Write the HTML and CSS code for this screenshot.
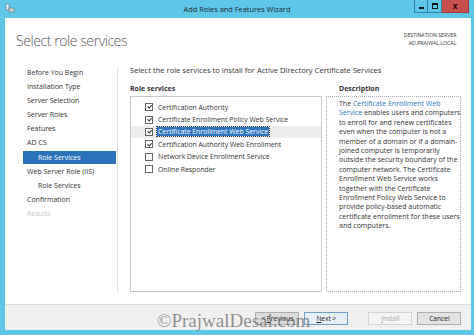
FILE: index.html
```html
<!DOCTYPE html>
<html lang="en">
<head>
  <meta charset="UTF-8">
  <title>Add Roles and Features Wizard</title>
  <link rel="stylesheet" href="styles.css">
</head>
<body>
  <div class="window">
    <div class="titlebar">
      <svg class="app-icon" width="10" height="10" viewBox="0 0 10 10">
        <rect x="1" y="1" width="3" height="6" fill="#e8f4f8" stroke="#7a8a90" stroke-width="0.8"/>
        <rect x="4" y="5" width="5" height="4" fill="#c9d3d6" stroke="#7a8a90" stroke-width="0.8"/>
      </svg>
      <span class="title">Add Roles and Features Wizard</span>
      <div class="controls">
        <span class="ctl ctl-min"><i></i></span>
        <span class="ctl ctl-max"><i></i></span>
        <span class="ctl ctl-close">x</span>
      </div>
    </div>

    <div class="frame">
      <div class="client">
        <header class="header">
          <h1 class="page-title">Select role services</h1>
          <div class="dest">
            <div>DESTINATION SERVER</div>
            <div>AD.PRAJWAL.LOCAL</div>
          </div>
        </header>

        <div class="body">
          <ul class="steps">
            <li>Before You Begin</li>
            <li>Installation Type</li>
            <li>Server Selection</li>
            <li>Server Roles</li>
            <li>Features</li>
            <li>AD CS</li>
            <li class="sub active">Role Services</li>
            <li>Web Server Role (IIS)</li>
            <li class="sub">Role Services</li>
            <li>Confirmation</li>
            <li class="disabled">Results</li>
          </ul>

          <div class="main">
            <p class="intro">Select the role services to install for Active Directory Certificate Services</p>
            <div class="panes">
              <div class="pane pane-roles">
                <h2 class="pane-title">Role services</h2>
                <ul class="listbox">
                  <li><span class="check on"></span>Certification Authority</li>
                  <li><span class="check on"></span>Certificate Enrollment Policy Web Service</li>
                  <li class="selected"><span class="check on"></span><span class="sel-text">Certificate Enrollment Web Service</span></li>
                  <li><span class="check on"></span>Certification Authority Web Enrollment</li>
                  <li><span class="check"></span>Network Device Enrollment Service</li>
                  <li><span class="check"></span>Online Responder</li>
                </ul>
              </div>
              <div class="pane pane-desc">
                <h2 class="pane-title">Description</h2>
                <div class="descbox">
                  The <a href="#">Certificate Enrollment Web<br>Service</a> enables users and computers<br>to enroll for and renew certificates<br>even when the computer is not a<br>member of a domain or if a domain-<br>joined computer is temporarily<br>outside the security boundary of the<br>computer network. The Certificate<br>Enrollment Web Service works<br>together with the Certificate<br>Enrollment Policy Web Service to<br>provide policy-based automatic<br>certificate enrollment for these users<br>and computers.
                </div>
              </div>
            </div>
          </div>
        </div>

        <footer class="footer">
          <button class="btn btn-prev">&lt; <u>P</u>revious</button>
          <button class="btn btn-default"><u>N</u>ext &gt;</button>
          <button class="btn btn-install" disabled><u>I</u>nstall</button>
          <button class="btn">Cancel</button>
        </footer>
      </div>
    </div>

    <div class="watermark">&copy;PrajwalDesai.com</div>
  </div>
</body>
</html>
```

FILE: styles.css
```css
body {
  margin: 0;
  padding: 0;
  font-family: 'Open Sans', 'Noto Sans', sans-serif;
  color: #333;
}
.window {
  position: relative;
  width: 474px;
  height: 335px;
  background: #5ec6e6;
  display: flex;
  flex-direction: column;
  overflow: hidden;
}
.titlebar {
  height: 18px;
  display: flex;
  align-items: flex-start;
  position: relative;
}
.app-icon {
  margin: 3px 0 0 5px;
}
.title {
  position: absolute;
  left: 0;
  right: 0;
  top: 4px;
  text-align: center;
  font-size: 7.4px;
  line-height: 10px;
  color: #1e2a30;
}
.controls {
  margin-left: auto;
  margin-right: 5px;
  display: flex;
  height: 13px;
  position: relative;
  z-index: 1;
}
.ctl {
  height: 13px;
  box-sizing: border-box;
  border: 1px solid #2f84a6;
  border-top: none;
  display: flex;
  align-items: center;
  justify-content: center;
}
.ctl-min {
  width: 13px;
  border-right: none;
}
.ctl-min i {
  width: 5px;
  height: 2px;
  margin-top: 4px;
  background: #111;
}
.ctl-max {
  width: 15px;
}
.ctl-max i {
  width: 4px;
  height: 3px;
  border: 1px solid #111;
  border-top-width: 2px;
}
.ctl-close {
  width: 27px;
  background: #c7504b;
  border-color: #a03c38;
  border-left: none;
  font-size: 8px;
  font-weight: 700;
  color: #2a0a08;
  line-height: 1;
}
.frame {
  flex: 1;
  padding: 0 7px 5px 5px;
  display: flex;
}
.client {
  flex: 1;
  background: #fff;
  display: flex;
  flex-direction: column;
}
.header {
  height: 48px;
  display: flex;
  justify-content: space-between;
  align-items: flex-start;
  padding: 0 15px 0 11px;
}
.page-title {
  margin: 13px 0 0;
  font-size: 14.2px;
  font-weight: 300;
  letter-spacing: -0.5px;
  color: #5a5a5a;
  line-height: 20px;
}
.dest {
  margin-top: 13px;
  text-align: right;
  font-size: 5.2px;
  line-height: 8px;
  color: #333;
}
.body {
  flex: 1;
  display: flex;
  padding-bottom: 12px;
}
.steps {
  list-style: none;
  margin: 2px 0 0;
  padding: 0 1px 0 0;
  width: 113px;
  box-sizing: border-box;
  border-right: 1px solid #e2e2e2;
}
.steps li {
  margin-left: 18px;
  padding-left: 4px;
  height: 14.1px;
  line-height: 14px;
  font-size: 7px;
  color: #333;
  white-space: nowrap;
}
.steps li:first-child {
  margin-top: -2px;
}
.steps li.sub {
  padding-left: 15px;
}
.steps li.active {
  background: #2b72b8;
  color: #fff;
  height: 13.5px;
  line-height: 13.5px;
  margin-bottom: 0.6px;
}
.steps li.disabled {
  color: #c4c4c4;
}
.main {
  flex: 1;
  padding: 0 10px 0 12px;
  display: flex;
  flex-direction: column;
}
.intro {
  margin: -1px 0 0;
  font-size: 7.6px;
  line-height: 10px;
}
.panes {
  flex: 1;
  display: flex;
  gap: 4px;
  margin-top: 9px;
}
.pane {
  display: flex;
  flex-direction: column;
}
.pane-roles {
  width: 192px;
}
.pane-desc {
  flex: 1;
}
.pane-title {
  margin: 0;
  font-size: 7px;
  font-weight: 700;
  line-height: 10px;
  color: #333;
  padding-bottom: 2px;
}
.pane-desc .pane-title {
  padding-left: 13px;
}
.listbox {
  flex: 1;
  list-style: none;
  margin: 0;
  padding: 4px 0 0;
  border: 1px solid #c8c8c8;
}
.listbox li {
  height: 12.4px;
  display: flex;
  align-items: center;
  padding-left: 14px;
  font-size: 6.85px;
  white-space: nowrap;
}
.listbox li.selected {
  background: #ececec;
}
.sel-text {
  background: #2f74bd;
  color: #fff;
  outline: 1px dotted #333;
  padding: 0 1px;
  margin-left: -1px;
  line-height: 9px;
}
.check {
  width: 6px;
  height: 6px;
  border: 1px solid #666;
  background: #fff;
  margin-right: 5px;
  position: relative;
  flex: none;
}
.check.on::after {
  content: "";
  position: absolute;
  left: 1.6px;
  top: 0.2px;
  width: 1.8px;
  height: 3.4px;
  border: solid #222;
  border-width: 0 1.2px 1.2px 0;
  transform: rotate(40deg);
}
.descbox {
  flex: 1;
  border: 1px dotted #aaa;
  padding: 2px 0 0 12px;
  font-size: 7px;
  line-height: 9.4px;
  color: #333;
  white-space: nowrap;
}
.descbox a {
  color: #2a78c2;
  text-decoration: none;
}
.footer {
  height: 26px;
  box-sizing: border-box;
  border-top: 1px solid #dcdcdc;
  background: #f0f0f0;
  display: flex;
  align-items: flex-start;
  justify-content: flex-end;
  padding: 7px 10px 0 0;
  gap: 5px;
}
.btn {
  width: 44px;
  height: 13px;
  padding: 0;
  font-family: inherit;
  font-size: 6.6px;
  line-height: 11px;
  color: #222;
  background: #e3e3e3;
  border: 1px solid #adadad;
  border-radius: 0;
}
.btn u {
  text-decoration: underline;
}
.btn-prev {
  background: #dcdcdc;
}
.btn-default {
  background: #e6eef6;
  border-color: #6d9ec7;
}
.btn-install {
  margin-left: 15px;
  background: #f4f4f4;
  border-color: #d2d2d2;
  color: #a8a8a8;
}
.watermark {
  position: absolute;
  left: 157px;
  top: 310px;
  font-family: 'Liberation Serif', serif;
  font-size: 19px;
  line-height: 22px;
  color: rgba(110, 110, 110, 0.75);
  white-space: nowrap;
}
```
